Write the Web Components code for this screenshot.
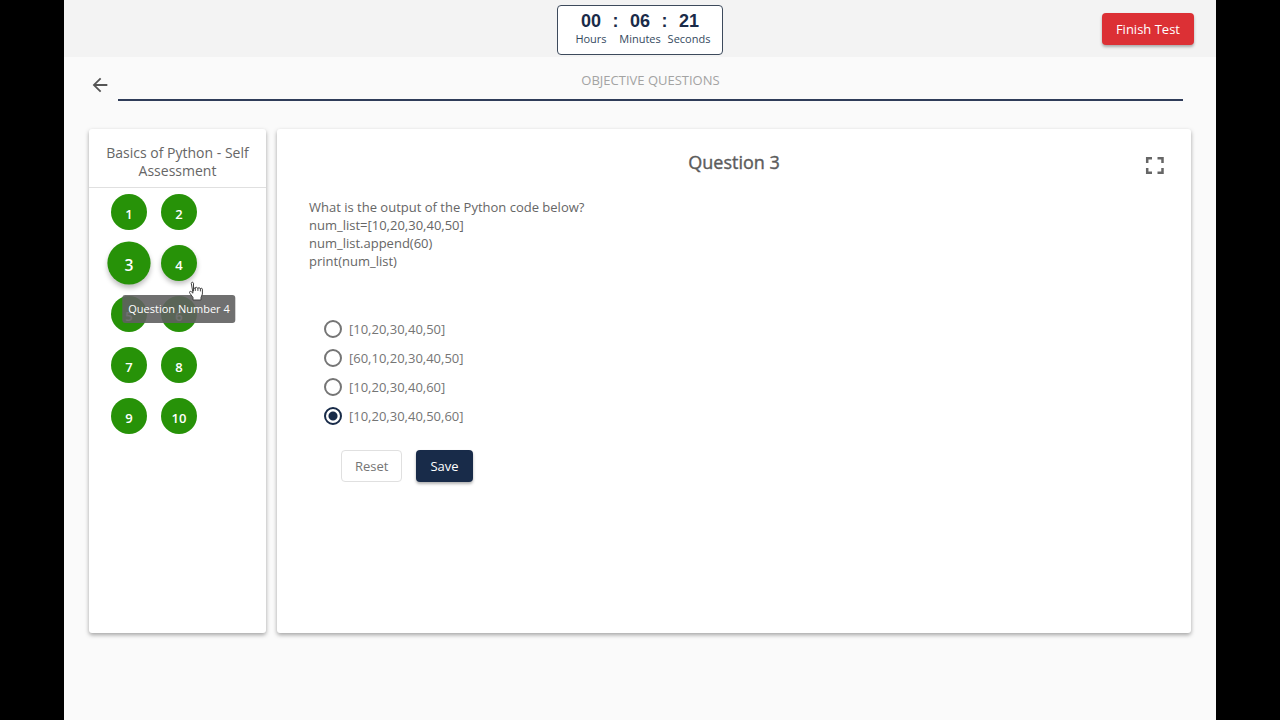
<!DOCTYPE html>
<html lang="en">
    <head>
        <meta charset="UTF-8"/>
        <title>Basics of Python - Self Assessment</title>
        <style>
            body {
                margin: 0;
                background: #000;
                color: #666;
                font-family: "Open Sans", "Noto Sans", sans-serif;
                font-size: 13px;
                line-height: 18px;
            }
        </style>
    </head>
    <body>
        <template id="test-page-temp">
            <style>
                :host {
                    display: flex;
                    flex-direction: column;
                    min-height: 100vh;
                    margin: 0 5%;
                    background: #fafafa;
                }
                header {
                    display: grid;
                    grid-template-columns: 1fr auto 1fr;
                    align-items: start;
                    padding: 5px 22px 2px;
                    background: #f3f3f3;
                }
                header action-button {
                    grid-column: 3;
                    justify-self: end;
                    margin-top: 8px;
                }
                header count-down {
                    grid-column: 2;
                }
                main {
                    display: flex;
                    gap: 11px;
                    min-height: 70vh;
                    margin: 28px 25px 86px;
                }
                question-list {
                    flex: 0 0 177px;
                }
                question-card {
                    flex: 1;
                }
            </style>
            <header>
                <count-down hours="00" minutes="06" seconds="21"></count-down>
                <action-button kind="danger">Finish Test</action-button>
            </header>
            <section-bar>Objective Questions</section-bar>
            <main>
                <question-list count="10" current="3" hovered="4">Basics of Python - Self Assessment</question-list>
                <question-card>
                    <span slot="title">Question 3</span>
                    <div slot="text">
                        What is the output of the Python code below?<br/>
                        num_list=[10,20,30,40,50]<br/>
                        num_list.append(60)<br/>
                        print(num_list)
                    </div>
                    <answer-options slot="options" selected="3"
                        options='["[10,20,30,40,50]", "[60,10,20,30,40,50]", "[10,20,30,40,60]", "[10,20,30,40,50,60]"]'></answer-options>
                    <action-button slot="actions" kind="plain">Reset</action-button>
                    <action-button slot="actions" kind="primary">Save</action-button>
                </question-card>
            </main>
        </template>

        <template id="count-down-temp">
            <style>
                :host {
                    display: block;
                    box-sizing: border-box;
                    padding: 5px 17px 8px;
                    border: 1px solid #3d4a5c;
                    border-radius: 4px;
                    background: #fff;
                    color: #1a2b49;
                }
                .clock {
                    display: grid;
                    grid-template-columns: 32px 17px 32px 17px 32px;
                    justify-items: center;
                }
                b {
                    font: bold 18px/20px "Liberation Sans", Arial, sans-serif;
                }
                small {
                    display: flex;
                    justify-content: center;
                    width: 32px;
                    font-size: 11px;
                    line-height: 15px;
                    color: #34495e;
                }
                small:nth-of-type(n+2) {
                    grid-column: span 2;
                    justify-self: end;
                }
            </style>
            <div class="clock" role="timer">
                <b id="hours"></b><b>:</b><b id="minutes"></b><b>:</b><b id="seconds"></b>
                <small>Hours</small><small>Minutes</small><small>Seconds</small>
            </div>
        </template>

        <template id="action-button-temp">
            <style>
                :host {
                    display: block;
                }
                button {
                    display: block;
                    padding: 6px 13px;
                    border: 1px solid transparent;
                    border-radius: 4px;
                    font: inherit;
                    line-height: 18px;
                    color: #fff;
                    box-shadow: 0 2px 3px rgba(0, 0, 0, .3);
                    cursor: pointer;
                }
                :host([kind="danger"]) button {
                    background: #dc3035;
                }
                :host([kind="primary"]) button {
                    background: #182b49;
                }
                :host([kind="plain"]) button {
                    border-color: #e0e0e0;
                    background: #fff;
                    color: #757575;
                    box-shadow: none;
                }
            </style>
            <button type="button"><slot></slot></button>
        </template>

        <template id="section-bar-temp">
            <style>
                :host {
                    display: flex;
                    padding: 11px 33px 0 25px;
                }
                button {
                    flex: none;
                    width: 22px;
                    margin-right: 7px;
                    padding: 0;
                    border: 0;
                    background: none;
                    color: #555;
                    cursor: pointer;
                }
                svg {
                    display: block;
                    margin: auto;
                }
                h1 {
                    flex: 1;
                    margin: 0;
                    padding: 3px 0 10px;
                    border-bottom: 2px solid #2f3c59;
                    font-size: 13px;
                    font-weight: 400;
                    line-height: 18px;
                    text-align: center;
                    text-transform: uppercase;
                    color: #a3a3a3;
                }
            </style>
            <button type="button" aria-label="Back">
                <svg width="22" height="22" viewBox="0 0 24 24" fill="currentColor">
                    <path d="M20 11H7.83l5.59-5.59L12 4l-8 8 8 8 1.41-1.41L7.83 13H20v-2z"/>
                </svg>
            </button>
            <h1><slot></slot></h1>
        </template>

        <template id="question-list-temp">
            <style>
                :host {
                    display: block;
                    border-radius: 3px;
                    background: #fff;
                    box-shadow: 0 2px 4px rgba(0, 0, 0, .35);
                }
                h2 {
                    margin: 0;
                    padding: 15px 12px 7px;
                    border-bottom: 1px solid #e0e0e0;
                    font-size: 14px;
                    font-weight: 400;
                    line-height: 18px;
                    text-align: center;
                }
                nav {
                    display: grid;
                    grid-template-columns: 36px 36px;
                    gap: 15px 14px;
                    padding: 6px 22px;
                }
            </style>
            <h2><slot></slot></h2>
            <nav></nav>
        </template>

        <template id="question-dot-temp">
            <style>
                :host {
                    display: block;
                    position: relative;
                }
                :host([hovered]) {
                    z-index: 1;
                }
                button {
                    display: block;
                    width: 36px;
                    height: 36px;
                    padding: 4px 0 0;
                    border: 0;
                    border-radius: 50%;
                    background: #279208;
                    color: #fff;
                    font: inherit;
                    font-weight: 600;
                    cursor: pointer;
                }
                :host([current]) button {
                    transform: scale(1.2);
                    box-shadow: 0 3px 4px rgba(0, 0, 0, .25);
                }
                :host([hovered]) button {
                    box-shadow: 0 3px 5px rgba(0, 0, 0, .25);
                }
                [role="tooltip"] {
                    position: absolute;
                    top: 50px;
                    left: 50%;
                    transform: translateX(-50%);
                    padding: 5px 6px;
                    border-radius: 3px;
                    background: rgba(97, 97, 97, .9);
                    color: #fff;
                    font-size: 11px;
                    line-height: 18px;
                    white-space: nowrap;
                }
                svg {
                    position: absolute;
                    top: 36px;
                    left: 28px;
                }
                :host(:not([hovered])) [role="tooltip"],
                :host(:not([hovered])) svg {
                    display: none;
                }
            </style>
            <button type="button"></button>
            <div role="tooltip"></div>
            <!-- hand pointer -->
            <svg width="15" height="20" viewBox="0 0 15 20" fill="#fff" stroke="#444" stroke-linejoin="round" stroke-linecap="round">
                <path d="M4.5 10V2.2C4.2.9 2.4.9 2.3 2.3L4 12.2 2.2 10.6C1 9.8-.1 11 .8 12.2L4 16.5V19H12V16.5L13.4 13V8.2C13.3 7 11.8 7 11.4 8 11.2 6.5 9.3 6.4 8.8 7.4 8.3 6 6.5 6 6 7L4.900 7.500"/>
                <path d="M6.300 7V9.500M8.900 7.400V9.500M11.400 8V10" fill="none"/>
            </svg>
        </template>

        <template id="question-card-temp">
            <style>
                :host {
                    display: block;
                    box-sizing: border-box;
                    padding: 22px 25px 32px 32px;
                    border-radius: 3px;
                    background: #fff;
                    box-shadow: 0 2px 4px rgba(0, 0, 0, .35);
                }
                .head {
                    display: grid;
                    grid-template-columns: 1fr auto 1fr;
                    margin-left: -7px;
                }
                h2 {
                    grid-column: 2;
                    margin: 0;
                    font-size: 18px;
                    font-weight: 400;
                    line-height: 22px;
                    color: #5c5c5c;
                    -webkit-text-stroke: 0.4px currentColor;
                }
                .head button {
                    justify-self: end;
                    padding: 2px 0 0;
                    border: 0;
                    background: none;
                    color: #666;
                    cursor: pointer;
                }
                svg {
                    display: block;
                }
                .text {
                    margin-top: 21px;
                }
                .options {
                    margin: 49px 0 0 15px;
                }
                .actions {
                    display: flex;
                    gap: 14px;
                    margin: 24px 0 0 32px;
                }
            </style>
            <div class="head">
                <h2><slot name="title"></slot></h2>
                <button type="button" aria-label="Full screen">
                    <svg width="23" height="24" viewBox="0 0 23 24" fill="none" stroke="currentColor" stroke-width="2.500">
                        <path d="M4.200 10V5.200H9M14.500 5.200H19.500V10M19.500 15V19.800H14.500M9 19.800H4.200V15"/>
                    </svg>
                </button>
            </div>
            <div class="text"><slot name="text"></slot></div>
            <div class="options"><slot name="options"></slot></div>
            <div class="actions"><slot name="actions"></slot></div>
        </template>

        <template id="answer-options-temp">
            <style>
                :host {
                    display: block;
                }
                fieldset {
                    display: grid;
                    gap: 9px;
                    margin: 0;
                    padding: 0;
                    border: 0;
                }
                label {
                    display: flex;
                    align-items: center;
                    gap: 7px;
                    height: 20px;
                    color: #757575;
                }
                input {
                    appearance: none;
                    box-sizing: border-box;
                    width: 18px;
                    height: 18px;
                    margin: 0;
                    border: 2px solid #757575;
                    border-radius: 50%;
                }
                input:checked {
                    border-color: #182b49;
                    background: radial-gradient(circle, #182b49 4px, #fff 5px);
                }
            </style>
            <fieldset aria-label="Answers"></fieldset>
        </template>

        <script>
            // element with an open shadow root cloned from its template
            class TemplateElement extends HTMLElement {
                constructor() {
                    super();
                    let templateElement = document.getElementById(this.localName + "-temp");
                    const shadowRoot = this.attachShadow({mode: "open"});
                    shadowRoot.appendChild(templateElement.content.cloneNode(true));
                }
            }

            customElements.define("action-button", class extends TemplateElement {});
            customElements.define("section-bar", class extends TemplateElement {});
            customElements.define("question-card", class extends TemplateElement {});

            customElements.define(
                "count-down",
                class extends TemplateElement {
                    connectedCallback() {
                        for (const unit of ["hours", "minutes", "seconds"]) {
                            this.shadowRoot.getElementById(unit).textContent = this.getAttribute(unit);
                        }
                    }
                }
            );

            customElements.define(
                "question-dot",
                class extends TemplateElement {
                    connectedCallback() {
                        const number = this.getAttribute("number");
                        this.shadowRoot.querySelector("button").textContent = number;
                        if (this.hasAttribute("hovered")) {
                            this.shadowRoot.querySelector("[role=tooltip]").textContent = "Question Number " + number;
                        }
                    }
                }
            );

            customElements.define(
                "question-list",
                class extends TemplateElement {
                    connectedCallback() {
                        const nav = this.shadowRoot.querySelector("nav");
                        for (let i = 1; i <= Number(this.getAttribute("count")); i++) {
                            const dot = document.createElement("question-dot");
                            dot.setAttribute("number", i);
                            dot.toggleAttribute("current", i === Number(this.getAttribute("current")));
                            dot.toggleAttribute("hovered", i === Number(this.getAttribute("hovered")));
                            nav.appendChild(dot);
                        }
                    }
                }
            );

            customElements.define(
                "answer-options",
                class extends TemplateElement {
                    connectedCallback() {
                        const fieldset = this.shadowRoot.querySelector("fieldset");
                        JSON.parse(this.getAttribute("options")).forEach((text, index) => {
                            const label = document.createElement("label");
                            const input = document.createElement("input");
                            input.type = "radio";
                            input.name = "answer";
                            input.checked = index === Number(this.getAttribute("selected"));
                            label.append(input, text);
                            fieldset.appendChild(label);
                        });
                    }
                }
            );

            customElements.define("test-page", class extends TemplateElement {});
        </script>

        <test-page></test-page>
    </body>
</html>
